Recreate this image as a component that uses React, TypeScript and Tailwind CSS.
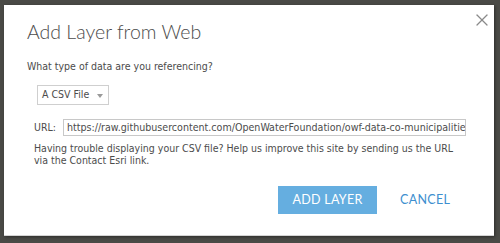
import { X } from "lucide-react";

export default function App() {
  return (
    <div className="w-[500px] h-[243px] bg-[#4a4a46] pt-[5px] pl-[4px] overflow-hidden">
      <div className="relative w-[490px] h-[231px] bg-white border-b border-[#d4d4d4] shadow-[1px_1px_3px_rgba(0,0,0,0.4)]">
        <button className="absolute right-[2px] top-[5px] text-[#8a8a8a]">
          <X size={20} strokeWidth={1.5} />
        </button>
        <div className="pl-[23px] pt-[15px] text-[#4c4c4c] font-['DejaVu_Sans_Condensed','DejaVu_Sans',sans-serif] text-[10.5px]">
          <h1 className="font-['Lato',sans-serif] font-light text-[19.5px] leading-[24px] text-[#4c4c4c]">
            Add Layer from Web
          </h1>
          <p className="mt-[16px] leading-[12px]">What type of data are you referencing?</p>
          <div className="mt-[13px] ml-[10px] flex items-center w-[72px] h-[20px] border border-[#cfcfcf] pl-[4px]">
            <span>A CSV File</span>
            <span className="ml-auto mr-[5px] mt-[1px] w-0 h-0 border-l-[3px] border-r-[3px] border-t-[4px] border-l-transparent border-r-transparent border-t-[#9a9a9a]" />
          </div>
          <div className="mt-[14px] ml-[7px] flex items-center">
            <span>URL:</span>
            <div className="ml-[7px] w-[403px] h-[17px] border border-[#c8c8c8] pl-[3px] flex items-center overflow-hidden whitespace-nowrap">
              <span className="text-[10.6px]">https://raw.githubusercontent.com/OpenWaterFoundation/owf-data-co-municipalities</span>
            </div>
          </div>
          <p className="mt-[6px] ml-[7px] leading-[12px] w-[422px]">
            Having trouble displaying your CSV file? Help us improve this site by sending us the URL via the Contact Esri link.
          </p>
          <div className="mt-[20px] flex items-center">
            <button className="ml-[251px] w-[99px] h-[28px] bg-[#65aee0] text-white font-['Lato',sans-serif] text-[12.5px] tracking-[0.3px]">
              ADD LAYER
            </button>
            <button className="ml-[23px] text-[#3d8fcf] font-['Lato',sans-serif] text-[12.5px] tracking-[0.3px]">
              CANCEL
            </button>
          </div>
        </div>
      </div>
    </div>
  );
}
